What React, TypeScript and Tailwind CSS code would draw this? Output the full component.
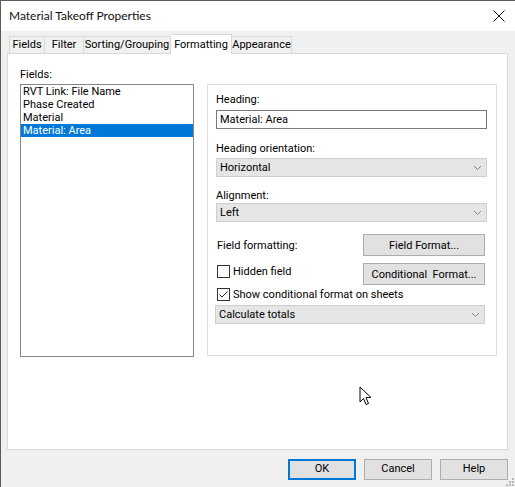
import React from "react";

const font = { fontFamily: 'Roboto, "Liberation Sans", Arial, sans-serif' };

function Chevron() {
  return (
    <svg width="9" height="6" viewBox="0 0 9 6" className="mr-[4px]">
      <path d="M1 1 L4.5 4.5 L8 1" fill="none" stroke="#888" strokeWidth="1" />
    </svg>
  );
}

function Select({ text, className }: { text: string; className: string }) {
  return (
    <div className={`flex h-[19px] items-center justify-between border border-[#cfcfcf] bg-[#e5e5e5] pl-[3px] text-[11px] text-black ${className}`}>
      <span>{text}</span>
      <Chevron />
    </div>
  );
}

function Button({ text, className }: { text: string; className: string }) {
  return (
    <div className={`flex items-center justify-center border border-[#adadad] bg-[#e1e1e1] text-[11px] text-black ${className}`}>
      {text}
    </div>
  );
}

function Check({ checked, className }: { checked: boolean; className?: string }) {
  return (
    <div className={`flex h-[13px] w-[13px] shrink-0 items-center justify-center border border-[#333] bg-white ${className ?? ""}`}>
      {checked && (
        <svg width="11" height="11" viewBox="0 0 11 11">
          <path d="M1.5 5.5 L4 8 L9.5 2.5" fill="none" stroke="#222" strokeWidth="1" />
        </svg>
      )}
    </div>
  );
}

export default function App() {
  return (
    <div className="relative flex h-[487px] w-[515px] flex-col overflow-hidden border-l border-t border-[#5b5b5b] bg-[#f0f0f0] text-black" style={font}>
      {/* Title bar */}
      <div className="flex h-[30px] items-center justify-between bg-white pl-[8px] pr-[10px]">
        <span className="text-[12px] text-[#111]" style={{ fontFamily: 'Lato, "Liberation Sans", sans-serif' }}>Material Takeoff Properties</span>
        <svg width="12" height="12" viewBox="0 0 12 12">
          <path d="M0.5 0.5 L11.5 11.5 M11.5 0.5 L0.5 11.5" stroke="#111" strokeWidth="1" />
        </svg>
      </div>

      {/* Body */}
      <div className="flex flex-1 flex-col pl-[6px] pr-[7px]">
        {/* Tabs */}
        <div className="flex h-[22px] items-end pl-[2px] text-[11px]">
          <div className="flex h-[17px] w-[36px] items-center justify-center border border-b-0 border-[#d9d9d9]">Fields</div>
          <div className="flex h-[17px] w-[39px] items-center justify-center border border-b-0 border-l-0 border-[#d9d9d9]">Filter</div>
          <div className="flex h-[17px] w-[87px] items-center justify-center border border-b-0 border-l-0 border-[#d9d9d9]">Sorting/Grouping</div>
          <div className="relative z-10 -mb-px flex h-[20px] w-[61px] items-start justify-center border border-b-0 border-l-0 border-[#d9d9d9] bg-white pt-[2px]">Formatting</div>
          <div className="flex h-[17px] w-[60px] items-center justify-center border border-b-0 border-l-0 border-[#d9d9d9]">Appearance</div>
        </div>

        {/* Panel */}
        <div className="flex h-[397px] flex-col border border-[#d9d9d9] bg-white pl-[12px] pt-[14px]">
          <div className="text-[11px] leading-[13px]">Fields:</div>
          <div className="mt-[3px] flex items-start">
            <div className="h-[273px] w-[174px] border border-[#828790] text-[11px] leading-[13px]">
              <div className="pl-[2px]">RVT Link: File Name</div>
              <div className="pl-[2px]">Phase Created</div>
              <div className="pl-[2px]">Material</div>
              <div className="bg-[#0078d7] pl-[2px] text-white">Material: Area</div>
            </div>
            <div className="ml-[13px] flex h-[272px] w-[290px] flex-col border border-[#dcdcdc] pl-[8px] pr-[9px] pt-[8px] text-[11px] leading-[13px]">
              <div>Heading:</div>
              <div className="mt-[4px] flex h-[19px] items-center border border-[#7a7a7a] pl-[3px]">Material: Area</div>
              <div className="mt-[13px]">Heading orientation:</div>
              <Select text="Horizontal" className="mt-[3px]" />
              <div className="mt-[12px]">Alignment:</div>
              <Select text="Left" className="mt-[1px]" />
              <div className="mt-[12px] flex items-center justify-between">
                <span className="pl-[1px]">Field formatting:</span>
                <Button text="Field Format..." className="mr-[2px] h-[22px] w-[122px]" />
              </div>
              <div className="mt-[7px] flex items-start justify-between">
                <div className="mt-[2px] flex items-center gap-[3px] pl-[1px]">
                  <Check checked={false} />
                  <span>Hidden field</span>
                </div>
                <Button text="Conditional  Format..." className="mr-[2px] h-[22px] w-[122px] whitespace-pre" />
              </div>
              <div className="mt-[3px] flex items-center gap-[3px] pl-[1px]">
                <Check checked={true} />
                <span>Show conditional format on sheets</span>
              </div>
              <Select text="Calculate totals" className="-ml-[1px] mr-[2px] mt-[4px]" />
            </div>
          </div>
        </div>

        {/* Buttons */}
        <div className="mt-[9px] flex justify-end gap-[8px]">
          <div className="flex h-[21px] w-[68px] items-center justify-center border-2 border-[#0078d7] bg-[#e1e1e1] text-[11px]">OK</div>
          <Button text="Cancel" className="h-[21px] w-[68px]" />
          <Button text="Help" className="h-[21px] w-[68px]" />
        </div>
      </div>

      {/* Resize grip */}
      <svg className="absolute bottom-[1px] right-[1px]" width="8" height="8" viewBox="0 0 8 8">
        <rect x="6" y="0" width="2" height="2" fill="#b8b8b8" />
        <rect x="3" y="3" width="2" height="2" fill="#b8b8b8" />
        <rect x="6" y="3" width="2" height="2" fill="#b8b8b8" />
        <rect x="0" y="6" width="2" height="2" fill="#b8b8b8" />
        <rect x="3" y="6" width="2" height="2" fill="#b8b8b8" />
        <rect x="6" y="6" width="2" height="2" fill="#b8b8b8" />
      </svg>

      {/* Mouse cursor */}
      <svg className="absolute left-[358px] top-[385px]" width="14" height="21" viewBox="0 0 14 21">
        <path d="M1 1 L1 16 L4.5 12.5 L7 18.5 L9.5 17.5 L7 11.5 L12 11.5 Z" fill="white" stroke="black" strokeWidth="1" strokeLinejoin="miter" />
      </svg>
    </div>
  );
}
